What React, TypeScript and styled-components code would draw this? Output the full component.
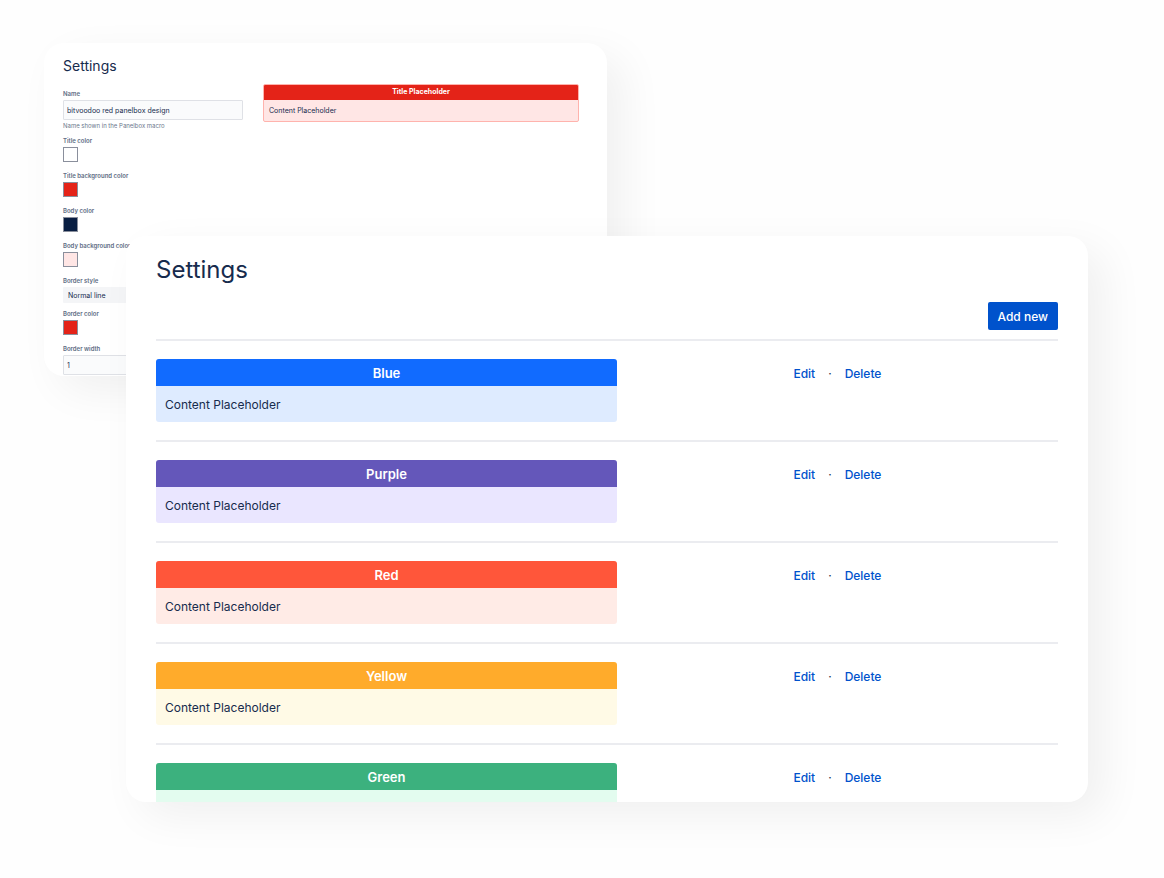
import React from "react";
import styled, { createGlobalStyle } from "styled-components";

const GlobalStyle = createGlobalStyle`
  * { box-sizing: border-box; }
  body {
    margin: 0;
    background: #fefefe;
    color: #172b4d;
    font-family: Inter, "Liberation Sans", sans-serif;
  }
  h1, h2, p, ul { margin: 0; padding: 0; }
  button, input, select { font: inherit; color: inherit; }
`;

/* The two windows share a grid and overlap in its middle cell. */
const Stage = styled.main`
  display: grid;
  grid-template-columns: 82px minmax(0, 1fr) minmax(0, 1fr);
  grid-template-rows: 193px 140px 426px;
  padding: 43px 76px 76px 44px;
`;

const Card = styled.section`
  min-width: 0;
  min-height: 0;
  overflow: hidden;
  background: #fff;
  border-radius: 20px;
  box-shadow: 16px 14px 44px rgba(0, 0, 0, 0.06);
`;

const BackCard = styled(Card)`
  grid-column: 1 / 3;
  grid-row: 1 / 3;
  padding: 13px 28px 0 19px;
`;

const FrontCard = styled(Card)`
  grid-column: 2 / 4;
  grid-row: 2 / 4;
  padding: 18px 30px 0;
`;

const SmallHeading = styled.h2`
  font-size: 14px;
  line-height: 20px;
  font-weight: 400;
`;

const Heading = styled.h1`
  font-size: 24px;
  line-height: 32px;
  font-weight: 400;
`;

const Editor = styled.div`
  display: grid;
  grid-template-columns: 180px minmax(0, 1fr);
  align-items: start;
  gap: 20px;
  margin-top: 8px;
`;

const Form = styled.form`
  display: flex;
  flex-direction: column;
  padding-top: 6px;
`;

const Field = styled.div<{ $space?: number }>`
  display: flex;
  flex-direction: column;
  align-items: flex-start;
  gap: 2px;
  margin-bottom: ${(p) => p.$space ?? 10}px;
`;

const Label = styled.label`
  color: #5e6c84;
  font-size: 6px;
  line-height: 8px;
  font-weight: 600;
`;

const Hint = styled.p`
  color: #6b778c;
  font-size: 6px;
  line-height: 8px;
`;

const TextInput = styled.input`
  width: 100%;
  height: 20px;
  padding: 0 3px;
  border: 1px solid #dfe1e6;
  border-radius: 1px;
  background: #fafbfc;
  font-size: 7px;
`;

const Select = styled.select`
  appearance: none;
  width: 100%;
  height: 16px;
  padding: 0 5px;
  border: 0;
  border-radius: 1px;
  background: #f4f5f7;
  font-size: 7px;
`;

const Swatch = styled.input`
  appearance: none;
  width: 15px;
  height: 15px;
  padding: 0;
  border: 1px solid #8a8f9c;
  background: none;
  &::-webkit-color-swatch-wrapper { padding: 0; }
  &::-webkit-color-swatch { border: 0; border-radius: 0; }
`;

const Preview = styled.div`
  overflow: hidden;
  border: 1px solid #ffb3ad;
  border-radius: 2px;
  background: #ffe6e5;
  font-size: 7px;
`;

const PreviewTitle = styled.div`
  margin: -1px -1px 0;
  background: #e42318;
  color: #fff;
  line-height: 16px;
  font-weight: 700;
  text-align: center;
`;

const PreviewBody = styled.div`
  padding: 0 5px;
  line-height: 21px;
`;

const Toolbar = styled.div`
  display: flex;
  justify-content: flex-end;
  padding: 16px 0 9px;
`;

const AddButton = styled.button`
  height: 28px;
  padding: 0 10px;
  border: 0;
  border-radius: 2px;
  background: #0052cc;
  color: #fff;
  font-size: 12px;
  font-weight: 500;
`;

const PanelList = styled.ul`
  list-style: none;
`;

const PanelRow = styled.li`
  display: grid;
  grid-template-columns: 461fr 441fr;
  align-items: start;
  padding: 18px 0;
  border-top: 2px solid #ebecf0;
`;

const Panel = styled.div<{ $fill: string }>`
  overflow: hidden;
  border-radius: 3px;
  background: ${(p) => p.$fill};
`;

const PanelTitle = styled.h2<{ $fill: string }>`
  padding-top: 2px;
  background: ${(p) => p.$fill};
  color: #fff;
  font-size: 13px;
  line-height: 25px;
  font-weight: 600;
  text-align: center;
`;

const PanelBody = styled.p`
  min-height: 36px;
  padding: 2px 9px 0;
  font-size: 12px;
  line-height: 34px;
`;

const Actions = styled.div`
  display: flex;
  gap: 13px;
  padding-left: 40%;
  font-size: 12px;
  line-height: 30px;
`;

const ActionLink = styled.a`
  color: #0052cc;
  font-weight: 500;
  text-decoration: none;
`;

const panels = [
  { name: "Blue", title: "#116bff", body: "#deebff", text: "Content Placeholder" },
  { name: "Purple", title: "#6457ba", body: "#eae6ff", text: "Content Placeholder" },
  { name: "Red", title: "#ff563a", body: "#ffebe6", text: "Content Placeholder" },
  { name: "Yellow", title: "#ffab2b", body: "#fffae6", text: "Content Placeholder" },
  { name: "Green", title: "#3cb17e", body: "#e3fcef", text: "" },
];

function ColorField({ id, label, color }: { id: string; label: string; color: string }) {
  return (
    <Field>
      <Label htmlFor={id}>{label}</Label>
      <Swatch id={id} type="color" defaultValue={color} />
    </Field>
  );
}

export default function App() {
  return (
    <>
      <GlobalStyle />
      <Stage>
        <BackCard>
          <SmallHeading>Settings</SmallHeading>
          <Editor>
            <Form>
              <Field $space={7}>
                <Label htmlFor="name">Name</Label>
                <TextInput id="name" defaultValue="bitvoodoo red panelbox design" />
                <Hint>Name shown in the Panelbox macro</Hint>
              </Field>
              <ColorField id="title-color" label="Title color" color="#ffffff" />
              <ColorField id="title-bg" label="Title background color" color="#e42318" />
              <ColorField id="body-color" label="Body color" color="#091e42" />
              <ColorField id="body-bg" label="Body background color" color="#ffe6e5" />
              <Field $space={7}>
                <Label htmlFor="border-style">Border style</Label>
                <Select id="border-style">
                  <option>Normal line</option>
                </Select>
              </Field>
              <ColorField id="border-color" label="Border color" color="#e42318" />
              <Field>
                <Label htmlFor="border-width">Border width</Label>
                <TextInput id="border-width" defaultValue="1" />
              </Field>
            </Form>
            <Preview>
              <PreviewTitle>Title Placeholder</PreviewTitle>
              <PreviewBody>Content Placeholder</PreviewBody>
            </Preview>
          </Editor>
        </BackCard>

        <FrontCard>
          <Heading>Settings</Heading>
          <Toolbar>
            <AddButton type="button">Add new</AddButton>
          </Toolbar>
          <PanelList>
            {panels.map((p) => (
              <PanelRow key={p.name}>
                <Panel $fill={p.body}>
                  <PanelTitle $fill={p.title}>{p.name}</PanelTitle>
                  <PanelBody>{p.text}</PanelBody>
                </Panel>
                <Actions>
                  <ActionLink href="#edit">Edit</ActionLink>
                  <span>·</span>
                  <ActionLink href="#delete">Delete</ActionLink>
                </Actions>
              </PanelRow>
            ))}
          </PanelList>
        </FrontCard>
      </Stage>
    </>
  );
}
